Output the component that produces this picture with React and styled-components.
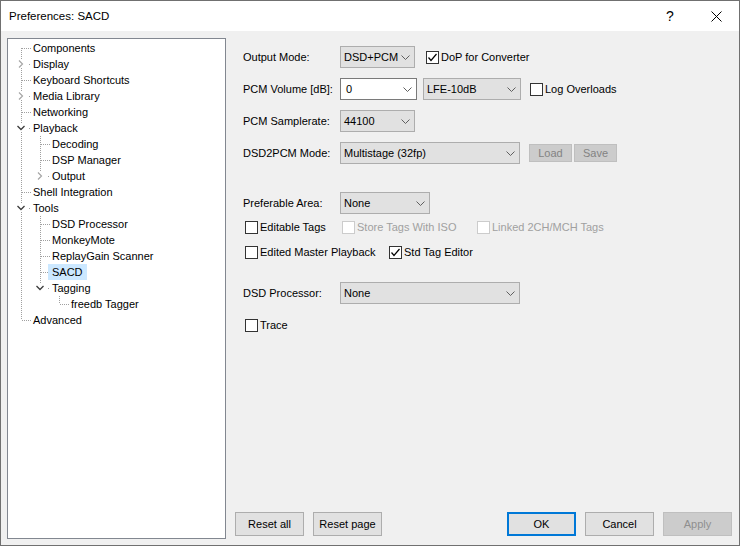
import React from "react";
import styled, { createGlobalStyle } from "styled-components";

const GlobalStyle = createGlobalStyle`
  html, body {
    margin: 0;
    padding: 0;
    background: #ffffff;
  }
  * {
    box-sizing: border-box;
  }
`;

const tree = [
  { label: "Components" },
  { label: "Display", closed: true },
  { label: "Keyboard Shortcuts" },
  { label: "Media Library", closed: true },
  { label: "Networking" },
  {
    label: "Playback",
    open: true,
    children: [
      { label: "Decoding" },
      { label: "DSP Manager" },
      { label: "Output", closed: true },
    ],
  },
  { label: "Shell Integration" },
  {
    label: "Tools",
    open: true,
    children: [
      { label: "DSD Processor" },
      { label: "MonkeyMote" },
      { label: "ReplayGain Scanner" },
      { label: "SACD", selected: true },
      { label: "Tagging", open: true, children: [{ label: "freedb Tagger" }] },
    ],
  },
  { label: "Advanced" },
];

const flatten = (nodes, guides = [], depth = 0, out = []) => {
  nodes.forEach((node, i) => {
    const last = i === nodes.length - 1;
    out.push({ ...node, guides, first: depth === 0 && i === 0, last });
    if (node.open && node.children) {
      flatten(node.children, [...guides, !last], depth + 1, out);
    }
  });
  return out;
};

const DOT = "#a0a0a0";

const Guide = ({ on }) => (
  <svg width="19" height="16" shapeRendering="crispEdges">
    {on && (
      <line x1="9.5" y1="0" x2="9.5" y2="16" stroke={DOT} strokeDasharray="1 1" />
    )}
  </svg>
);

const Connector = ({ first, last, open, closed }) => {
  const toggle = open || closed;
  return (
    <svg width="19" height="16">
      <g shapeRendering="crispEdges" stroke={DOT} strokeDasharray="1 1">
        {!first && <line x1="9.5" y1="0" x2="9.5" y2={toggle ? 4 : 8} />}
        {!last && <line x1="9.5" y1={toggle ? 12 : 8} x2="9.5" y2="16" />}
        {!toggle && <line x1="10" y1="8.5" x2="19" y2="8.5" />}
        {toggle && <line x1="17" y1="8.5" x2="18" y2="8.5" />}
      </g>
      {closed && (
        <polyline points="7,4.5 10.5,8 7,11.5" fill="none" stroke="#a6a6a6" strokeWidth="1.2" />
      )}
      {open && (
        <polyline points="5.5,6 9,9.5 12.5,6" fill="none" stroke="#3c3c3c" strokeWidth="1.3" />
      )}
    </svg>
  );
};

const Chevron = () => (
  <svg width="9" height="5" viewBox="0 0 9 5">
    <polyline points="0.5,0.5 4.5,4.5 8.5,0.5" fill="none" stroke="#5f5f5f" strokeWidth="1" />
  </svg>
);

const CheckMark = () => (
  <svg width="11" height="11" viewBox="0 0 11 11">
    <polyline points="1.5,5.5 4,8.5 9.5,2" fill="none" stroke="#000" strokeWidth="1.2" />
  </svg>
);

const Select = ({ width, value, editable }) => (
  <Combo $width={width} $editable={editable}>
    <span>{value}</span>
    <Chevron />
  </Combo>
);

const Check = ({ label, checked, disabled, width }) => (
  <CheckWrap $width={width} $disabled={disabled}>
    <Box $disabled={disabled}>{checked && <CheckMark />}</Box>
    <span>{label}</span>
  </CheckWrap>
);

const App = () => {
  const rows = flatten(tree);
  return (
    <>
      <GlobalStyle />
      <Window>
        <TitleBar>
          <Title>Preferences: SACD</Title>
          <Caption>
            <CaptionButton>
              <Help>?</Help>
            </CaptionButton>
            <CaptionButton>
              <svg width="11" height="11" viewBox="0 0 11 11">
                <path d="M0.5 0.5 L10.5 10.5 M10.5 0.5 L0.5 10.5" stroke="#000" strokeWidth="1" />
              </svg>
            </CaptionButton>
          </Caption>
        </TitleBar>

        <Body>
          <TreePanel>
            {rows.map((row) => (
              <TreeRow key={row.label}>
                {row.guides.map((g, i) => (
                  <Guide key={i} on={g} />
                ))}
                <Connector first={row.first} last={row.last} open={row.open} closed={row.closed} />
                <TreeLabel $selected={row.selected}>{row.label}</TreeLabel>
              </TreeRow>
            ))}
          </TreePanel>

          <Page>
            <Settings>
              <Row $top={8} $height={22}>
                <Label>Output Mode:</Label>
                <Select width={75} value="DSD+PCM" />
                <Spacer $w={9} />
                <Check label="DoP for Converter" checked />
              </Row>
              <Row $top={10} $height={22}>
                <Label>PCM Volume [dB]:</Label>
                <Select width={77} value="0" editable />
                <Spacer $w={6} />
                <Select width={98} value="LFE-10dB" />
                <Spacer $w={7} />
                <Check label="Log Overloads" />
              </Row>
              <Row $top={10} $height={22}>
                <Label>PCM Samplerate:</Label>
                <Select width={75} value="44100" />
              </Row>
              <Row $top={10} $height={22}>
                <Label>DSD2PCM Mode:</Label>
                <Select width={180} value="Multistage (32fp)" />
                <Spacer $w={9} />
                <SmallButton>Load</SmallButton>
                <Spacer $w={2} />
                <SmallButton>Save</SmallButton>
              </Row>

              <Row $top={28} $height={22}>
                <Label>Preferable Area:</Label>
                <Select width={90} value="None" />
              </Row>
              <Row $top={5} $height={16}>
                <Check label="Editable Tags" width={97} />
                <Check label="Store Tags With ISO" width={135} disabled />
                <Check label="Linked 2CH/MCH Tags" disabled />
              </Row>
              <Row $top={9} $height={16}>
                <Check label="Edited Master Playback" width={144} />
                <Check label="Std Tag Editor" checked />
              </Row>

              <Row $top={22} $height={22}>
                <Label>DSD Processor:</Label>
                <Select width={180} value="None" />
              </Row>
              <Row $top={13} $height={16}>
                <Check label="Trace" />
              </Row>
            </Settings>

            <Footer>
              <Button>Reset all</Button>
              <Button>Reset page</Button>
              <Grow />
              <Button $primary>OK</Button>
              <Button>Cancel</Button>
              <Button disabled>Apply</Button>
            </Footer>
          </Page>
        </Body>
      </Window>
    </>
  );
};

export default App;

const Window = styled.div`
  width: 740px;
  height: 546px;
  border: 1px solid #707070;
  background: #f0f0f0;
  display: flex;
  flex-direction: column;
  font-family: "Liberation Sans", Arial, sans-serif;
  font-size: 11px;
  color: #000;
`;

const TitleBar = styled.div`
  height: 30px;
  background: #ffffff;
  display: flex;
  align-items: center;
  justify-content: space-between;
  padding-left: 8px;
`;

const Title = styled.div`
  font-size: 11.5px;
`;

const Caption = styled.div`
  display: flex;
  height: 100%;
`;

const CaptionButton = styled.div`
  width: 46px;
  height: 100%;
  display: flex;
  align-items: center;
  justify-content: center;
`;

const Help = styled.span`
  font-size: 14px;
  line-height: 1;
`;

const Body = styled.div`
  flex: 1;
  display: flex;
  padding: 7px 7px 7px 6px;
  min-height: 0;
`;

const TreePanel = styled.div`
  width: 219px;
  height: 501px;
  flex-shrink: 0;
  background: #ffffff;
  border: 1px solid #828790;
  padding: 1px 0 0 4px;
`;

const TreeRow = styled.div`
  display: flex;
  align-items: center;
  height: 16px;

  > svg {
    flex-shrink: 0;
  }
`;

const TreeLabel = styled.span`
  margin-left: -2px;
  padding: 0 4px;
  height: 16px;
  line-height: 16px;
  white-space: nowrap;
  background: ${({ $selected }) => ($selected ? "#cce8ff" : "transparent")};
`;

const Page = styled.div`
  flex: 1;
  display: flex;
  flex-direction: column;
`;

const Settings = styled.div`
  padding-left: 17px;
  display: flex;
  flex-direction: column;
`;

const Row = styled.div`
  display: flex;
  align-items: center;
  margin-top: ${({ $top }) => $top}px;
  height: ${({ $height }) => $height}px;
`;

const Label = styled.span`
  width: 97px;
  flex-shrink: 0;
  white-space: nowrap;
`;

const Spacer = styled.span`
  width: ${({ $w }) => $w}px;
  flex-shrink: 0;
`;

const Combo = styled.div`
  width: ${({ $width }) => $width}px;
  height: 22px;
  flex-shrink: 0;
  display: flex;
  align-items: center;
  justify-content: space-between;
  padding: 0 4px 0 ${({ $editable }) => ($editable ? 5 : 3)}px;
  background: ${({ $editable }) => ($editable ? "#ffffff" : "#e1e1e1")};
  border: 1px solid ${({ $editable }) => ($editable ? "#7a7a7a" : "#adadad")};
  white-space: nowrap;
`;

const CheckWrap = styled.label`
  display: flex;
  align-items: center;
  width: ${({ $width }) => ($width ? `${$width}px` : "auto")};
  flex-shrink: 0;
  white-space: nowrap;
  color: ${({ $disabled }) => ($disabled ? "#a0a0a0" : "#000")};

  > span {
    margin-left: 2px;
  }
`;

const Box = styled.span`
  width: 13px;
  height: 13px;
  flex-shrink: 0;
  display: flex;
  align-items: center;
  justify-content: center;
  background: #ffffff;
  border: 1px solid ${({ $disabled }) => ($disabled ? "#cccccc" : "#333333")};
`;

const SmallButton = styled.div`
  width: 43px;
  height: 18px;
  display: flex;
  align-items: center;
  justify-content: center;
  background: #cccccc;
  border: 1px solid #bfbfbf;
  color: #838383;
`;

const Footer = styled.div`
  margin-top: auto;
  margin-bottom: 2px;
  padding-left: 9px;
  display: flex;
  gap: 9px;
`;

const Grow = styled.div`
  flex: 1;
`;

const Button = styled.button`
  width: 69px;
  height: 24px;
  padding: 0;
  font-family: inherit;
  font-size: 11px;
  display: flex;
  align-items: center;
  justify-content: center;
  background: ${({ disabled }) => (disabled ? "#cccccc" : "#e1e1e1")};
  border: ${({ $primary }) => ($primary ? "2px solid #0078d7" : "1px solid #adadad")};
  border-color: ${({ disabled }) => disabled && "#bfbfbf"};
  color: ${({ disabled }) => (disabled ? "#8f8f8f" : "#000")};
  margin-left: ${({ $primary }) => ($primary ? "-8px" : "0")};
`;
